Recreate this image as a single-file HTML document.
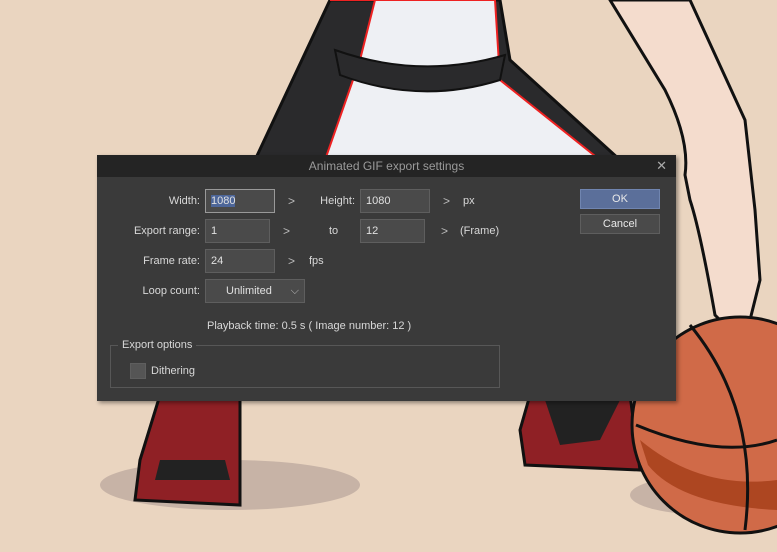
<!DOCTYPE html>
<html><head><meta charset="utf-8"><style>
body{margin:0;width:777px;height:552px;overflow:hidden;background:#ead5c0;font-family:"Liberation Sans",sans-serif;font-size:11px;color:#d8d8d8;position:relative}
.a{position:absolute}
.inp{position:absolute;background:#4a4a4a;border:1px solid #5e5e5e;box-sizing:border-box;height:24px;line-height:22px;padding-left:5px;color:#e0e0e0}
.lbl{position:absolute;text-align:right;line-height:24px}
.chev{position:absolute;line-height:24px;color:#bbb;font-size:12px}
.btn{position:absolute;left:580px;width:80px;height:20px;box-sizing:border-box;text-align:center;line-height:18px;color:#e8e8e8}
</style></head><body>
<svg class="a" style="left:0;top:0" width="777" height="552">
<ellipse cx="230" cy="485" rx="130" ry="25" fill="#c7b3a6"/>
<ellipse cx="710" cy="495" rx="80" ry="20" fill="#c7b3a6"/>
<path d="M255 160 L330 0 L500 0 L510 60 L620 160 Z" fill="#2a2a2c" stroke="#111" stroke-width="3"/>
<path d="M330 0 L375 0 L360 60 L325 160 L600 160 L500 80 L495 0 Z" fill="#eef0f4" stroke="#e22" stroke-width="2"/>
<path d="M335 50 Q420 80 505 55 L500 80 Q420 105 340 75 Z" fill="#2a2a2c" stroke="#111" stroke-width="2"/>
<path d="M610 0 L665 90 Q690 140 685 175 L690 200 Q700 230 715 315 L725 325 L750 320 L760 280 L755 210 L745 120 L690 0 Z" fill="#f4dccd" stroke="#111" stroke-width="3"/>
<path d="M160 395 L240 395 L240 505 L135 500 L140 460 Z" fill="#8f2025" stroke="#111" stroke-width="3"/>
<path d="M160 460 L225 460 L230 480 L155 480 Z" fill="#222"/>
<path d="M530 395 L630 395 L640 470 L525 465 L520 430 Z" fill="#8f2025" stroke="#111" stroke-width="3"/>
<path d="M545 400 L620 400 L600 440 L560 445 Z" fill="#222"/>
<circle cx="740" cy="425" r="108" fill="#d06a48" stroke="#111" stroke-width="3"/>
<path d="M640 440 Q700 490 777 480 L777 510 Q680 505 648 465 Z" fill="#ad4621"/>
<path d="M690 325 Q760 410 745 530 M636 425 Q720 460 777 440" stroke="#111" stroke-width="3" fill="none"/>
</svg>
<div class="a" style="left:97px;top:155px;width:579px;height:246px;background:#3a3a3a;box-shadow:2px 2px 4px rgba(0,0,0,.4)">
<div class="a" style="left:0;top:0;width:579px;height:22px;background:#242424;line-height:22px;text-align:center;color:#9a9a9a;font-size:12px">Animated GIF export settings</div>
<div class="a" style="right:9px;top:0;line-height:22px;color:#aaa;font-size:13px">✕</div>
</div>
<div class="lbl" style="left:100px;width:100px;top:189px">Width:</div>
<div class="inp" style="left:205px;top:189px;width:70px;border-color:#999"><span style="background:#4d6699">1080</span></div>
<div class="chev" style="left:288px;top:189px">&gt;</div>
<div class="lbl" style="left:300px;width:55px;top:189px">Height:</div>
<div class="inp" style="left:360px;top:189px;width:70px">1080</div>
<div class="chev" style="left:443px;top:189px">&gt;</div>
<div class="lbl" style="left:463px;top:189px">px</div>
<div class="lbl" style="left:100px;width:100px;top:219px">Export range:</div>
<div class="inp" style="left:205px;top:219px;width:65px">1</div>
<div class="chev" style="left:283px;top:219px">&gt;</div>
<div class="lbl" style="left:329px;top:219px">to</div>
<div class="inp" style="left:360px;top:219px;width:65px">12</div>
<div class="chev" style="left:441px;top:219px">&gt;</div>
<div class="lbl" style="left:460px;top:219px">(Frame)</div>
<div class="lbl" style="left:100px;width:100px;top:249px">Frame rate:</div>
<div class="inp" style="left:205px;top:249px;width:70px">24</div>
<div class="chev" style="left:288px;top:249px">&gt;</div>
<div class="lbl" style="left:309px;top:249px">fps</div>
<div class="lbl" style="left:100px;width:100px;top:279px">Loop count:</div>
<div class="inp" style="left:205px;top:279px;width:100px;padding-left:20px">Unlimited<span style="position:absolute;right:5px;color:#bbb">⌵</span></div>
<div class="btn" style="top:189px;background:#5b6f9a;border:1px solid #7085b0">OK</div>
<div class="btn" style="top:214px;background:#4a4a4a;border:1px solid #5e5e5e">Cancel</div>
<div class="a" style="left:207px;top:320px">Playback time: 0.5 s ( Image number: 12 )</div>
<div class="a" style="left:110px;top:345px;width:390px;height:43px;border:1px solid #575757;box-sizing:border-box"></div>
<div class="a" style="left:118px;top:339px;background:#3a3a3a;padding:0 4px">Export options</div>
<div class="a" style="left:130px;top:363px;width:16px;height:16px;background:#555;border:1px solid #5e5e5e;box-sizing:border-box"></div>
<div class="a" style="left:151px;top:365px">Dithering</div>
</body></html>
